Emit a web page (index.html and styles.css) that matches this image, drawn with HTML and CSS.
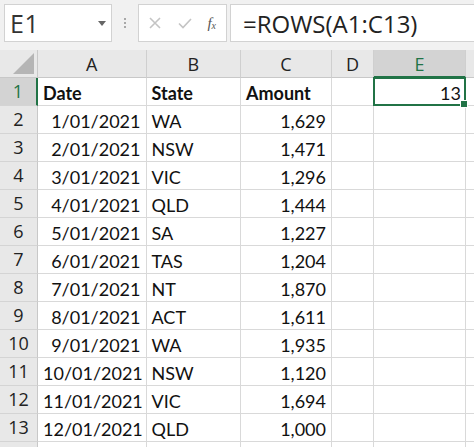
FILE: index.html
```html
<!DOCTYPE html>
<html>
<head>
<meta charset="utf-8">
<link rel="stylesheet" href="styles.css">
</head>
<body>
<div class="app">
  <div class="toolbar">
    <div class="namebox">
      <span class="name">E1</span>
      <svg class="caret" width="8" height="5" viewBox="0 0 8 5"><path d="M0 0h8L4 5z" fill="#666"/></svg>
    </div>
    <div class="grip"><i></i><i></i><i></i></div>
    <div class="fbuttons">
      <svg width="14" height="14" viewBox="0 0 14 14"><path d="M2 2L12 12M12 2L2 12" stroke="#c4c4c4" stroke-width="1.6"/></svg>
      <svg width="16" height="14" viewBox="0 0 16 14"><path d="M2 7.5L6 11.5L14 3" stroke="#c4c4c4" stroke-width="1.6" fill="none"/></svg>
      <span class="fx">f<sub>x</sub></span>
    </div>
    <div class="formula">=ROWS(A1:C13)</div>
  </div>
  <div class="grid">
    <div class="corner"><svg width="21" height="21" viewBox="0 0 21 21"><path d="M21 0V21H0z" fill="#b5b5b5"/></svg></div>
    <div class="ch">A</div><div class="ch">B</div><div class="ch">C</div><div class="ch">D</div><div class="ch sel">E</div><div class="ch last"></div>

    <div class="rh sel">1</div><div class="c b">Date</div><div class="c b">State</div><div class="c b">Amount</div><div class="c"></div><div class="c r active">13<span class="handle"></span></div><div class="c last"></div>

    <div class="rh">2</div><div class="c r">1/01/2021</div><div class="c">WA</div><div class="c r">1,629</div><div class="c"></div><div class="c"></div><div class="c last"></div>
    <div class="rh">3</div><div class="c r">2/01/2021</div><div class="c">NSW</div><div class="c r">1,471</div><div class="c"></div><div class="c"></div><div class="c last"></div>
    <div class="rh">4</div><div class="c r">3/01/2021</div><div class="c">VIC</div><div class="c r">1,296</div><div class="c"></div><div class="c"></div><div class="c last"></div>
    <div class="rh">5</div><div class="c r">4/01/2021</div><div class="c">QLD</div><div class="c r">1,444</div><div class="c"></div><div class="c"></div><div class="c last"></div>
    <div class="rh">6</div><div class="c r">5/01/2021</div><div class="c">SA</div><div class="c r">1,227</div><div class="c"></div><div class="c"></div><div class="c last"></div>
    <div class="rh">7</div><div class="c r">6/01/2021</div><div class="c">TAS</div><div class="c r">1,204</div><div class="c"></div><div class="c"></div><div class="c last"></div>
    <div class="rh">8</div><div class="c r">7/01/2021</div><div class="c">NT</div><div class="c r">1,870</div><div class="c"></div><div class="c"></div><div class="c last"></div>
    <div class="rh">9</div><div class="c r">8/01/2021</div><div class="c">ACT</div><div class="c r">1,611</div><div class="c"></div><div class="c"></div><div class="c last"></div>
    <div class="rh">10</div><div class="c r">9/01/2021</div><div class="c">WA</div><div class="c r">1,935</div><div class="c"></div><div class="c"></div><div class="c last"></div>
    <div class="rh">11</div><div class="c r">10/01/2021</div><div class="c">NSW</div><div class="c r">1,120</div><div class="c"></div><div class="c"></div><div class="c last"></div>
    <div class="rh">12</div><div class="c r">11/01/2021</div><div class="c">VIC</div><div class="c r">1,694</div><div class="c"></div><div class="c"></div><div class="c last"></div>
    <div class="rh">13</div><div class="c r">12/01/2021</div><div class="c">QLD</div><div class="c r">1,000</div><div class="c"></div><div class="c"></div><div class="c last"></div>
    <div class="rh">14</div><div class="c"></div><div class="c"></div><div class="c"></div><div class="c"></div><div class="c"></div><div class="c last"></div>
  </div>
</div>
</body>
</html>
```
FILE: styles.css
```css
html, body {
  margin: 0;
  padding: 0;
  background: #ffffff;
  overflow: hidden;
}
.app {
  width: 474px;
  height: 447px;
  overflow: hidden;
  font-family: Lato, "Liberation Sans", sans-serif;
}
.toolbar {
  height: 50px;
  box-sizing: border-box;
  background: #f1f1f1;
  padding: 4px 0 8px 4px;
  display: flex;
  align-items: stretch;
}
.namebox {
  width: 108px;
  box-sizing: border-box;
  background: #fff;
  border: 1px solid #d2d2d2;
  display: flex;
  align-items: center;
  padding: 0 5px 0 5px;
  justify-content: space-between;
}
.name {
  font-family: "Open Sans", "Noto Sans", sans-serif;
  font-size: 25px;
  color: #333;
  letter-spacing: 0.5px;
}
.caret { margin-top: 1px; }
.grip {
  width: 26px;
  display: flex;
  flex-direction: column;
  align-items: center;
  justify-content: center;
  gap: 2px;
}
.grip i {
  display: block;
  width: 2px;
  height: 2px;
  background: #a8a8a8;
}
.fbuttons {
  width: 89px;
  box-sizing: border-box;
  background: #fff;
  border: 1px solid #d2d2d2;
  display: flex;
  align-items: center;
  justify-content: space-between;
  padding: 0 10px 0 9px;
}
.fx {
  font-family: "Liberation Serif", serif;
  font-style: italic;
  font-size: 15px;
  color: #555;
}
.fx sub { font-size: 10px; vertical-align: -1px; }
.formula {
  margin-left: 3px;
  flex: 1;
  background: #fff;
  border: 1px solid #d2d2d2;
  border-right: none;
  display: flex;
  align-items: center;
  padding-left: 12px;
  font-family: "Open Sans", "Noto Sans", sans-serif;
  font-size: 24px;
  color: #222;
}
.grid {
  display: grid;
  grid-template-columns: 38px 108.5px 94.5px 91px 42px 92px 8px;
  grid-auto-rows: 28px;
}
.grid > div {
  box-sizing: border-box;
  border-right: 1px solid #d9d9d9;
  border-bottom: 1px solid #d9d9d9;
  overflow: hidden;
  white-space: nowrap;
}
.corner {
  background: #e8e8e8;
  display: flex;
  align-items: flex-end;
  justify-content: flex-end;
  padding: 0 3px 3px 0;
}
.grid > .corner { border-right: 1px solid #c8c8c8; border-bottom: 1px solid #c8c8c8; }
.ch {
  background: #e8e8e8;
  text-align: center;
  font-family: "Open Sans", "Noto Sans", sans-serif;
  font-size: 18px;
  line-height: 28px;
  color: #222;
}
.grid > .ch { border-right: 1px solid #cfcfcf; border-bottom: 1px solid #c8c8c8; }
.grid > .ch.sel {
  background: #d3d3d3;
  color: #217346;
  border-bottom: 2px solid #217346;
}
.rh {
  background: #e8e8e8;
  text-align: center;
  font-family: "Open Sans", "Noto Sans", sans-serif;
  font-size: 18px;
  line-height: 27px;
  color: #222;
}
.grid > .rh { border-right: 1px solid #c8c8c8; border-bottom: 1px solid #d4d4d4; }
.grid > .rh.sel {
  background: #d3d3d3;
  color: #217346;
  border-right: 2px solid #217346;
}
.c {
  font-size: 18px;
  line-height: 30px;
  color: #111;
  padding: 0 4px 0 5px;
}
.c.r { text-align: right; padding-right: 5px; }
.c.b { font-weight: bold; }
.grid > .c.last { border-right: none; }
.grid > .ch.last { border-right: none; }
.active {
  position: relative;
  overflow: visible !important;
}
.grid > .active {
  border: 2px solid #217346;
  margin: -1px 0 0 -1px;
  line-height: 28px;
  padding-right: 3px;
}
.handle {
  position: absolute;
  right: -4px;
  bottom: -4px;
  width: 6px;
  height: 6px;
  background: #217346;
  border: 1px solid #fff;
}
```
